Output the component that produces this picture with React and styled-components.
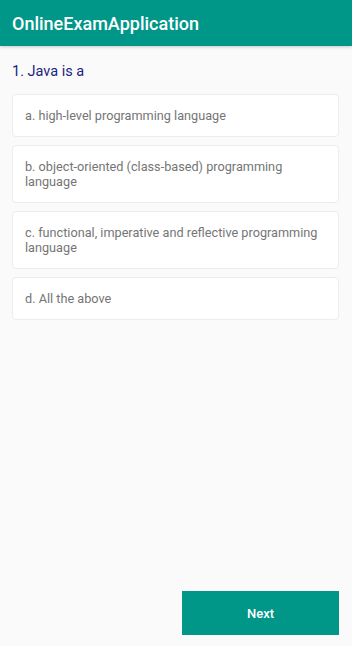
import React from 'react'
import styled, { createGlobalStyle } from 'styled-components'

const GlobalStyle = createGlobalStyle`
  html, body {
    margin: 0;
    padding: 0;
    background-color: #fafafa;
    font-family: Roboto, 'Noto Sans', sans-serif;
  }
`

const Screen = styled.div`
  display: flex;
  flex-direction: column;
  width: 352px;
  height: 646px;
  background-color: #fafafa;
`

const AppBar = styled.header`
  display: flex;
  align-items: center;
  height: 46px;
  padding: 0 12px;
  background-color: #009688;
  box-shadow: 0 1px 3px rgba(0, 0, 0, 0.2);
  color: #fff;
  font-size: 18px;
  font-weight: 500;
`

const Content = styled.main`
  display: flex;
  flex: 1;
  flex-direction: column;
  padding: 16px 13px 0 12px;
`

const Question = styled.div`
  color: #1a237e;
  font-size: 14.5px;
  line-height: 20px;
  margin-bottom: 12px;
`

const Options = styled.div`
  display: flex;
  flex-direction: column;
  gap: 8px;
`

const Option = styled.div`
  padding: 13px 12px;
  background-color: #fff;
  border: 1px solid #ededed;
  border-radius: 4px;
  color: #757575;
  font-size: 12.7px;
  line-height: 15px;
`

const Footer = styled.div`
  display: flex;
  justify-content: flex-end;
  padding: 0 13px 11px 0;
`

const NextButton = styled.button`
  width: 157px;
  height: 44px;
  border: none;
  background-color: #009688;
  color: #fff;
  font-family: Roboto, sans-serif;
  font-size: 13px;
  font-weight: 500;
  cursor: pointer;
`

const options = [
  'a. high-level programming language',
  'b. object-oriented (class-based) programming language',
  'c. functional, imperative and reflective programming language',
  'd. All the above',
]

export default function App() {
  return (
    <Screen>
      <GlobalStyle />
      <AppBar>OnlineExamApplication</AppBar>
      <Content>
        <Question>1. Java is a</Question>
        <Options>
          {options.map(text => (
            <Option key={text}>{text}</Option>
          ))}
        </Options>
      </Content>
      <Footer>
        <NextButton>Next</NextButton>
      </Footer>
    </Screen>
  )
}
